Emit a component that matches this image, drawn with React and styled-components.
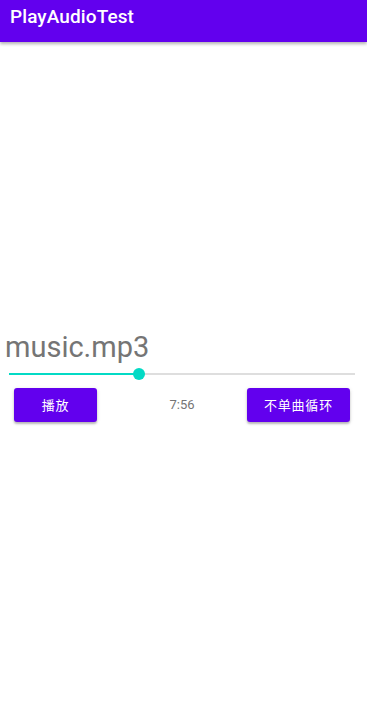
import React from 'react'
import styled, { createGlobalStyle } from 'styled-components'

const GlobalStyle = createGlobalStyle`
  html, body {
    margin: 0;
    padding: 0;
    height: 100%;
    background: #fff;
    font-family: Roboto, "Noto Sans CJK SC", sans-serif;
  }
  #root {
    height: 100%;
  }
`

const Screen = styled.div`
  display: flex;
  flex-direction: column;
  width: 367px;
  height: 705px;
  overflow: hidden;
`

const AppBar = styled.header`
  flex: 0 0 42px;
  display: flex;
  align-items: center;
  padding: 0 10px;
  background: #6200ee;
  box-shadow: 0 2px 3px rgba(0, 0, 0, 0.3);
  position: relative;
  z-index: 1;
`

const Title = styled.h1`
  margin: 0 0 9px;
  color: #fff;
  font-family: Roboto, sans-serif;
  font-size: 19px;
  font-weight: 500;
  letter-spacing: 0.1px;
`

const Body = styled.main`
  flex: 1;
  display: flex;
  flex-direction: column;
  justify-content: center;
  padding-top: 4px;
`

const FileName = styled.div`
  padding-left: 5px;
  color: #757575;
  font-family: Roboto, sans-serif;
  font-size: 29px;
  line-height: 34px;
`

const Seek = styled.div`
  position: relative;
  height: 20px;
  margin: 0 12px 0 9px;
`

const Track = styled.div`
  position: absolute;
  left: 0;
  right: 0;
  top: 9px;
  height: 2px;
  background: #dedede;
`

const Progress = styled.div`
  position: absolute;
  left: 0;
  top: 9px;
  height: 2px;
  background: #03dac5;
`

const Thumb = styled.div`
  position: absolute;
  top: 4px;
  width: 12px;
  height: 12px;
  margin-left: -6px;
  border-radius: 50%;
  background: #03dac5;
`

const Controls = styled.div`
  display: flex;
  align-items: center;
  justify-content: space-between;
  padding: 0 17px 0 14px;
  margin-top: 4px;
`

const Button = styled.button`
  width: ${({ $w }) => $w}px;
  height: 34px;
  border: none;
  border-radius: 3px;
  background: #6200ee;
  color: #fff;
  font-family: Roboto, "Noto Sans CJK SC", sans-serif;
  font-size: 13px;
  letter-spacing: 0.8px;
  box-shadow: 0 2px 2px rgba(0, 0, 0, 0.22), 0 1px 4px rgba(0, 0, 0, 0.12);
  padding: 0;
`

const Time = styled.span`
  color: #757575;
  font-family: Roboto, sans-serif;
  font-size: 13px;
  margin-left: 20px;
`

export default function App() {
  const pos = 130
  return (
    <>
      <GlobalStyle />
      <Screen>
        <AppBar>
          <Title>PlayAudioTest</Title>
        </AppBar>
        <Body>
          <FileName>music.mp3</FileName>
          <Seek>
            <Track />
            <Progress style={{ width: pos }} />
            <Thumb style={{ left: pos }} />
          </Seek>
          <Controls>
            <Button $w={83}>播放</Button>
            <Time>7:56</Time>
            <Button $w={103}>不单曲循环</Button>
          </Controls>
        </Body>
      </Screen>
    </>
  )
}
